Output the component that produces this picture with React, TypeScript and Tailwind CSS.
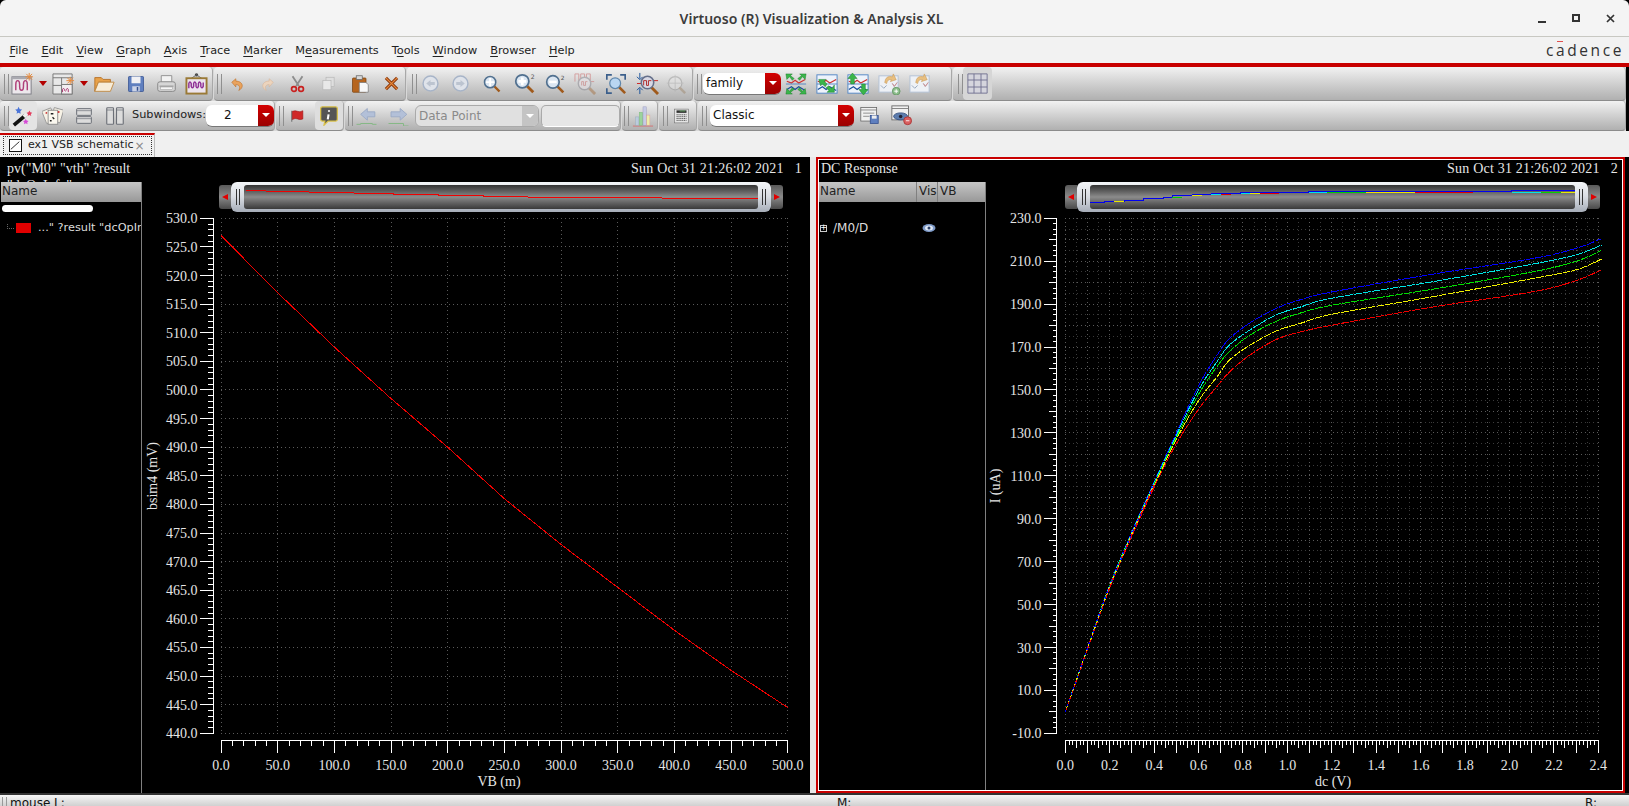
import type { ReactNode } from "react";

const sans = "font-['DejaVu_Sans',sans-serif]";
const serif = "font-['Liberation_Serif',serif]";

const Ico = ({ w, h = w, vb = 24, children }: { w: number; h?: number; vb?: number; children: ReactNode }) => (
  <svg width={w} height={h} viewBox={`0 0 ${vb} ${vb}`} className="shrink-0">
    {children}
  </svg>
);

const wave = "M5 19v-6q0-4 2-4t2 4v2q0 4 2 4t2-4v-2q0-4 2-4t2 4v6";

const Star = ({ x, y }: { x: number; y: number }) => (
  <g stroke="#e8893a" strokeWidth="1" transform={`translate(${x} ${y})`}>
    <path d="M0-4V4M-4 0H4M-3-3L3 3M-3 3L3-3" />
  </g>
);

const NewWave = () => (
  <Ico w={23}>
    <rect x="1" y="5" width="20" height="18" fill="#ece8ec" stroke="#7d7d85" />
    <rect x="1" y="5" width="20" height="2.500" fill="#a9a9b0" />
    <path d={wave} fill="none" stroke="#b0407a" strokeWidth="1.500" />
    <Star x={19} y={5} />
  </Ico>
);

const NewLayout = () => (
  <Ico w={23}>
    <path d="M1 2h20v21H1z" fill="#e8e8e8" stroke="#777" />
    <path d="M1 6h20M10 6v17M1 14h9" stroke="#777" fill="none" />
    <rect x="10" y="13" width="11" height="10" fill="#f2eef0" stroke="#777" />
    <path d="M11 21v-3q1-2 2 0v1q1 2 2 0v-1q1-2 2 0v3" stroke="#a9356f" fill="none" />
    <Star x={19} y={9} />
  </Ico>
);

const Drop = () => <span className="ml-[5px] w-0 h-0 border-x-[4px] border-x-transparent border-t-[5px] border-t-[#b30000] shrink-0" />;

const Folder = () => (
  <Ico w={22}>
    <path d="M2 20V5h7l2 2h8v3H6L2 20z" fill="#e8a24a" stroke="#b8732a" />
    <path d="M2 20l4-10h17l-4 10z" fill="#f7edd9" stroke="#c08a45" />
  </Ico>
);

const Save = () => (
  <Ico w={18}>
    <rect x="2" y="2" width="20" height="20" rx="1" fill="#5f7fbf" stroke="#34508f" />
    <rect x="6" y="2" width="12" height="9" fill="#f1f1f4" />
    <rect x="7" y="15" width="10" height="7" fill="#ccd3e6" />
    <rect x="13" y="16" width="2" height="5" fill="#34508f" />
  </Ico>
);

const Print = () => (
  <Ico w={21}>
    <path d="M6 10V3h12v7" fill="#f2f2f2" stroke="#8a8a8a" />
    <path d="M2 12q0-2 3-2h14q3 0 3 2v7q0 2-3 2H5q-3 0-3-2z" fill="#d6d6d6" stroke="#7f7f7f" />
    <path d="M4 15h16" stroke="#888" />
    <rect x="5" y="16" width="14" height="3" fill="#f6f6f6" stroke="#999" strokeWidth=".6" />
  </Ico>
);

const Screen = () => (
  <Ico w={23}>
    <circle cx="12" cy="3" r="1.8" fill="#444" />
    <path d="M12 3L6 7M12 3l6 4" stroke="#666" />
    <rect x="1.5" y="6.5" width="21" height="16" fill="#ece4ee" stroke="#9a7a36" strokeWidth="2" />
    <path d="M4 17v-5q1-3 2.5 0v3q1 3 2.500 0v-3q1-3 2.500 0v3q1 3 2.500 0v-3q1-3 2.500 0v3q1 3 2.500 0v-4" fill="none" stroke="#8e2f95" strokeWidth="1.500" />
  </Ico>
);

const Undo = ({ faded }: { faded?: boolean }) => (
  <Ico w={14} h={16}>
    <path
      d="M3 9l7-6v4c7 0 11 4 11 8 0 3-2 6-6 8 2-3 2-5 1-7-1-2-3-3-6-3v4z"
      fill={faded ? "#ecd4bd" : "#e9a35e"}
      stroke={faded ? "#d8b496" : "#bd6d22"}
      transform={faded ? "matrix(-1 0 0 1 24 0)" : undefined}
    />
  </Ico>
);

const Scissors = () => (
  <Ico w={17} h={22}>
    <path d="M5 1l9 14M19 1l-9 14" stroke="#8c8c8c" strokeWidth="2.600" />
    <circle cx="7" cy="19" r="3.400" fill="none" stroke="#c9201f" strokeWidth="2.400" />
    <circle cx="17" cy="19" r="3.400" fill="none" stroke="#c9201f" strokeWidth="2.400" />
  </Ico>
);

const CopyIco = () => (
  <Ico w={15} h={17}>
    <rect x="8" y="2" width="13" height="15" fill="#dedede" stroke="#b3b3b3" />
    <rect x="3" y="7" width="13" height="15" fill="#e8e8e8" stroke="#b3b3b3" />
  </Ico>
);

const Paste = () => (
  <Ico w={18} h={22}>
    <rect x="2" y="4" width="18" height="19" rx="1" fill="#b6651e" stroke="#7a4312" />
    <rect x="7" y="1" width="8" height="5" fill="#d9d9d9" stroke="#666" />
    <path d="M11 10h9l3 3v10H11z" fill="#f7f7f7" stroke="#777" />
  </Ico>
);

const XIco = () => (
  <Ico w={15}>
    <path d="M3 3l18 18M21 3L3 21" stroke="#8a3a10" strokeWidth="5" />
    <path d="M3 3l18 18M21 3L3 21" stroke="#e8883a" strokeWidth="2" />
  </Ico>
);

const Circ = ({ dir }: { dir: "l" | "r" }) => (
  <Ico w={17}>
    <circle cx="12" cy="12" r="10.500" fill="#dfe3ea" stroke="#a7b4c8" strokeWidth="2" />
    <path d={dir === "l" ? "M6 12l6-5v3h6v4h-6v3z" : "M18 12l-6-5v3H6v4h6v3z"} fill="#bcc4d0" />
  </Ico>
);

const Mag = ({ w = 18, faded, children }: { w?: number; faded?: boolean; children?: ReactNode }) => (
  <Ico w={w}>
    <g opacity={faded ? 0.45 : 1}>
      <path d="M14 14l8 8" stroke="#a05a1c" strokeWidth="3.200" />
      <circle cx="9.500" cy="9.500" r="7.500" fill="#dbe6f2" stroke="#51708f" strokeWidth="2" />
      {children}
    </g>
  </Ico>
);

const Fit = () => (
  <Ico w={20}>
    <path d="M1 7V1h6M17 1h6v6M1 17v6h6" fill="none" stroke="#3b5f8c" strokeWidth="2" />
    <path d="M15 15l8 8" stroke="#a05a1c" strokeWidth="3" />
    <circle cx="11" cy="11" r="6.500" fill="#b9d6f2" stroke="#5f86ab" strokeWidth="1.500" />
  </Ico>
);

const PulseMag = ({ faded }: { faded?: boolean }) => (
  <Ico w={23}>
    <g opacity={faded ? 0.55 : 1}>
      <path d="M1 10V2h4v8h2V2h4v8h2V2h4v8h4" fill="none" stroke="#cc6a6a" />
      <path d="M15 16l7 7" stroke="#a87a50" strokeWidth="3" />
      <circle cx="11" cy="12" r="6.500" fill="#e8e2e6" stroke="#8d8d95" strokeWidth="1.500" />
      <path d="M8 14v-4h2v4h2v-4h2" fill="none" stroke="#c77" />
    </g>
  </Ico>
);

const PulseZoom = () => (
  <Ico w={23}>
    <path d="M4 1v6M4 17v6" stroke="#174f9a" />
    <path d="M1 5l3 3 3-3M1 19l3-3 3 3" fill="none" stroke="#174f9a" />
    <path d="M1 12h6M18 9h5" stroke="#c22" />
    <path d="M16 16l7 7" stroke="#a05a1c" strokeWidth="3" />
    <circle cx="12" cy="11" r="6.500" fill="#d8d8e4" stroke="#66708a" strokeWidth="1.600" />
    <path d="M8 14v-5h3v5h2V9h3" fill="none" stroke="#b02a2a" />
  </Ico>
);

const Cross = () => (
  <Ico w={20}>
    <g opacity=".5">
      <circle cx="11" cy="11" r="8" fill="#e6e6e6" stroke="#999" strokeWidth="1.500" />
      <path d="M11 1v20M1 11h20" stroke="#aaa" />
      <path d="M16 16l7 7" stroke="#a08a70" strokeWidth="3" />
    </g>
  </Ico>
);

const GArrow = ({ d }: { d: string }) => <path d={d} fill="#39b54a" stroke="#1c7a2a" strokeWidth=".5" />;

const Traces = ({ mode }: { mode: 1 | 2 | 3 }) => (
  <Ico w={22}>
    <rect x="1" y="2" width="22" height="20" fill={mode === 1 ? "none" : "#eef3fb"} stroke={mode === 1 ? "none" : "#4f84c4"} />
    <path d="M2 9l5 2 4-3 4 3 7-4" fill="none" stroke="#c33" strokeWidth="1.300" />
    <path d="M2 18l5-3 4 3 4-3 7 4" fill="none" stroke="#174f9a" strokeWidth="1.300" />
    <path d="M1 12h22" stroke="#4f84c4" />
    {mode === 1 && (
      <>
        <GArrow d="M1 1h7L6 3l4 3-2 2-3-4-3 3zM23 1h-7l2 2-4 3 2 2 3-4 3 3zM1 23h7l-2-2 4-3-2-2-3 4-3-3zM23 23h-7l2-2-4-3 2-2 3 4 3-3z" />
      </>
    )}
    {mode === 2 && (
      <>
        <GArrow d="M3 7l8 0-2 2 3 3-2 3-3-3-2 2zM20 13v8h-8l2-2-3-3 3-2 3 3z" />
      </>
    )}
    {mode === 3 && (
      <>
        <GArrow d="M6 0l5 6H8v6H4V6H1zM18 24l-5-6h3v-6h4v6h3z" />
      </>
    )}
  </Ico>
);

const TraceOrange = ({ plus }: { plus?: boolean }) => (
  <Ico w={23}>
    <rect x="1" y="4" width="20" height="17" fill="#eef1f6" stroke="#b4c2d6" />
    <path d="M3 14l3 3 3-3M15 12l2 3 3-4" fill="none" stroke="#97a8bd" />
    <path d="M15 12l2 3 3-4" fill="none" stroke="#d79090" />
    <path d="M7 11q1-8 8-6l1-3 3 6-6 2 1-2q-4-1-5 4z" fill="#e8bf80" stroke="#c89a58" strokeWidth=".6" />
    {plus && (
      <>
        <circle cx="19" cy="20" r="4" fill="#8dbf8d" stroke="#6a9a6a" />
        <path d="M17 20h4M19 18v4" stroke="#fff" />
      </>
    )}
  </Ico>
);

const GridIco = () => (
  <Ico w={21}>
    <path d="M1 1h22v22H1zM1 8h22M1 16h22M8 1v22M16 1v22" fill="#d5d5dd" stroke="#6d6d8d" />
  </Ico>
);

const Wand = () => (
  <Ico w={22}>
    <path d="M2 22L15 11" stroke="#111" strokeWidth="4" />
    <path d="M13 13l3-3" stroke="#eee" strokeWidth="4" />
    <path d="M7 2l1.500 2.500 2.500.5-2 2 .5 2.500L7 8.500 5 9.500l.5-2.500-2-2 2.500-.5z" fill="#4a74d8" />
    <path d="M19 6l1 2 2 .5-1.500 1.500.5 2-2-1-2 1 .5-2L16 8.500l2-.5z" fill="#e33b5c" />
    <path d="M15 15l1 2 2 .5-1.500 1.500.5 2-2-1-2 1 .5-2-1.500-1.500 2-.5z" fill="#d64bd6" />
  </Ico>
);

const Cards = () => (
  <Ico w={21}>
    <rect x="2" y="5" width="11" height="15" fill="#f7f2e6" stroke="#999" transform="rotate(-22 7 12)" />
    <rect x="12" y="4" width="11" height="15" fill="#f7f2e6" stroke="#999" transform="rotate(16 17 11)" />
    <rect x="7" y="6" width="11" height="16" fill="#fbf8ef" stroke="#888" />
    <path d="M10 10h3M12 14l2 2M9 18h2" stroke="#222" strokeWidth="1.500" />
    <circle cx="5" cy="9" r="1" fill="#c33" />
    <circle cx="19" cy="8" r="1.200" fill="#c33" />
  </Ico>
);

const Stack = () => (
  <Ico w={16} h={18}>
    <rect x="1" y="1" width="22" height="10" rx="1" fill="#dcdcdc" stroke="#6c7078" strokeWidth="1.500" />
    <rect x="1" y="13" width="22" height="10" rx="1" fill="#dcdcdc" stroke="#6c7078" strokeWidth="1.500" />
    <path d="M1 4h22M1 16h22" stroke="#6c7078" />
  </Ico>
);

const Cols = () => (
  <Ico w={18}>
    <rect x="1" y="1" width="9" height="22" rx="1" fill="#dcdcdc" stroke="#6c7078" strokeWidth="1.500" />
    <rect x="14" y="1" width="9" height="22" rx="1" fill="#dcdcdc" stroke="#6c7078" strokeWidth="1.500" />
    <path d="M1 4h9M14 4h9" stroke="#6c7078" />
  </Ico>
);

const Flag = () => (
  <Ico w={14} h={16}>
    <path d="M3 3v19" stroke="#777" strokeWidth="2" />
    <path d="M4 4q5-2 9 0t9-1v14q-5 2-9 0t-9 1z" fill="#d02828" stroke="#9c1414" />
  </Ico>
);

const Info = () => (
  <Ico w={20}>
    <path d="M2 3q0-2 2-2h16q2 0 2 2v13q0 2-2 2H11l-5 5 1-5H4q-2 0-2-2z" fill="#555" stroke="#d9c14a" strokeWidth="1.500" />
    <path d="M12 5v2M11.500 10l-1 6" stroke="#fff" strokeWidth="2.500" />
  </Ico>
);

const StepArrow = ({ dir }: { dir: "l" | "r" }) => (
  <Ico w={21} h={20}>
    <path d={dir === "l" ? "M0 22h5v-1h14M19 21v1h5" : "M0 21h18v3h6"} fill="none" stroke="#86b886" strokeWidth="1.200" />
    <path d={dir === "l" ? "M5 10l8-7v4h9v6h-9v4z" : "M22 10l-8-7v4H3v6h11v4z"} fill="#b3c0d8" stroke="#98a7c4" />
  </Ico>
);

const ChartIco = () => (
  <Ico w={22}>
    <path d="M1 23h22" stroke="#c88" strokeWidth="1.500" />
    <rect x="4" y="13" width="3.500" height="9" fill="#bcd" stroke="#9ab" strokeWidth=".5" />
    <rect x="8" y="8" width="3.500" height="14" fill="#9bd49b" stroke="#7b7" strokeWidth=".5" />
    <rect x="12" y="2" width="3.500" height="20" fill="#c6cbe6" stroke="#99b" strokeWidth=".5" />
    <rect x="16" y="11" width="3.500" height="11" fill="#eea" stroke="#d99" strokeWidth=".5" />
  </Ico>
);

const Calc = () => (
  <Ico w={15} h={18}>
    <rect x="1" y="1" width="22" height="22" fill="#e4e4e4" stroke="#777" />
    <rect x="4" y="3" width="16" height="4" fill="#333" />
    <path d="M9 4h9" stroke="#6c6" />
    <path d="M4 10h16M4 13h16M4 16h16M4 19h16" stroke="#555" strokeWidth="1.500" strokeDasharray="2 1" />
  </Ico>
);

const SaveWin = () => (
  <Ico w={19}>
    <rect x="1" y="2" width="20" height="17" fill="#f1f1f1" stroke="#666" />
    <path d="M1 5h20M4 9h14M4 13h8" stroke="#777" />
    <rect x="13" y="12" width="10" height="10" fill="#5f7fbf" stroke="#34508f" />
    <rect x="15" y="12" width="6" height="4" fill="#eee" />
  </Ico>
);

const EyeOff = () => (
  <Ico w={21}>
    <rect x="1" y="1" width="19" height="16" fill="#f1f1f1" stroke="#666" />
    <path d="M1 4h19" stroke="#777" />
    <ellipse cx="11" cy="13" rx="8" ry="4" fill="#5c7cad" stroke="#324f80" />
    <circle cx="11" cy="13" r="2" fill="#223" />
    <circle cx="19" cy="18" r="4.500" fill="#d96060" stroke="#a33" />
    <path d="M17 18h4" stroke="#fff" />
  </Ico>
);

const Handle = () => <span className="w-[5px] h-[20px] border-x border-[#8f8f8f] shrink-0" />;

const Group = ({ className, children }: { className: string; children: ReactNode }) => (
  <div className={`flex items-center h-full rounded-[4px] border-b border-r border-b-[#8c8c8c] border-r-[#a8a8a8] bg-linear-to-b from-[#f2f2f2] to-[#b0b0b0] ${className}`}>
    {children}
  </div>
);

const Combo = ({ text, className, grey, textClass = "pl-[3px]" }: { text: string; className: string; grey?: boolean; textClass?: string }) => (
  <div className={`flex items-stretch h-[22px] shrink-0 rounded-[6px] overflow-hidden border-b border-[#777] ${grey ? "bg-[#e0e0e0]" : "bg-white"} ${className}`}>
    <span className={`flex-1 text-[12px] leading-[21px] ${textClass} ${grey ? "text-[#8a8a8a]" : "text-[#111]"}`}>{text}</span>
    <span className={`w-[16px] flex items-center justify-center ${grey ? "bg-[#c4c4c4]" : "bg-linear-to-b from-[#d40000] to-[#9a0000]"}`}>
      <span className="w-0 h-0 border-x-[4px] border-x-transparent border-t-[4px] border-t-white" />
    </span>
  </div>
);

const Menu = ({ u, rest, pre = "" }: { u: string; rest: string; pre?: string }) => (
  <span>
    {pre}
    <span className="underline underline-offset-2">{u}</span>
    {rest}
  </span>
);

// ---- plot data

const vth: [number, number][] = [
  [0, 527], [50, 517], [100, 507.5], [150, 498.5], [200, 490], [250, 481], [300, 473], [350, 465.5], [400, 458], [450, 451], [500, 444.5],
];

const low: [number, number][] = [[0, 0], [0.1, 29.5], [0.2, 58.5], [0.3, 83], [0.4, 106]];
const xs = [0.5, 0.6, 0.682, 0.74, 0.832, 0.95, 1.057, 1.206, 1.656, 2.107, 2.3, 2.414];
const curves: { color: string; v: number[] }[] = [
  { color: "#0000ff", v: [130, 152, 166, 174, 181.3, 188, 192, 195.8, 204, 211.3, 216, 220.5] },
  { color: "#00e5e5", v: [129, 150, 163, 171, 178, 185, 188.6, 192.9, 200.5, 208.7, 213, 217.5] },
  { color: "#00e000", v: [128, 148, 160.8, 168, 175.6, 182, 185.8, 189.6, 197, 205.1, 210, 215] },
  { color: "#f0f000", v: [127, 145, 156, 164, 170.9, 177.5, 181, 185.4, 193.5, 202, 206, 211] },
  { color: "#f00000", v: [125, 141, 151.500, 158.500, 166.3, 173.500, 177, 180.3, 188.7, 195.8, 201, 206] },
];

const rx = (d: number) => 1065.3 + d * 222.1;
const ry = (v: number) => 218.3 + (230 - v) * 2.146;
const lx = (v: number) => 220 + v * 1.1334;
const ly = (v: number) => 218.3 + (530 - v) * 5.722;

const range = (n: number) => Array.from({ length: n }, (_, i) => i);

// catmull-rom, sampled, so the knee of the curves stays round
const smooth = (pts: number[][]) => {
  const out: string[] = [];
  for (let i = 0; i < pts.length - 1; i++) {
    const p0 = pts[Math.max(i - 1, 0)];
    const p1 = pts[i];
    const p2 = pts[i + 1];
    const p3 = pts[Math.min(i + 2, pts.length - 1)];
    for (let k = 0; k < 8; k++) {
      const t = k / 8;
      const f = (a: number, b: number, c: number, d: number) =>
        0.5 * (2 * b + (c - a) * t + (2 * a - 5 * b + 4 * c - d) * t * t + (3 * b - a - 3 * c + d) * t * t * t);
      out.push(`${f(p0[0], p1[0], p2[0], p3[0])},${f(p0[1], p1[1], p2[1], p3[1])}`);
    }
  }
  const last = pts[pts.length - 1];
  out.push(`${last[0]},${last[1]}`);
  return out.join(" ");
};

const LeftPlot = () => (
  <svg viewBox="141 212 669 581" className="w-[669px] h-[581px] block" shapeRendering="crispEdges">
    {range(19).map((i) => (
      <line key={i} x1={220} x2={787} y1={218.3 + i * 28.61} y2={218.3 + i * 28.61} stroke="#5a5a5a" strokeDasharray="1 3" />
    ))}
    {range(11).map((i) => (
      <line key={i} y1={218} y2={733} x1={220 + i * 56.67} x2={220 + i * 56.67} stroke="#5a5a5a" strokeDasharray="1 3" />
    ))}
    <line x1={212} x2={212} y1={218} y2={734} stroke="#fff" />
    {range(91).map((i) => {
      const y = 218.3 + i * 5.722;
      return <line key={i} x1={i % 5 === 0 ? 199 : 207} x2={212} y1={y} y2={y} stroke="#fff" />;
    })}
    {range(19).map((i) => (
      <text key={i} x={196.5} y={218.3 + i * 28.61 + 5} textAnchor="end" fill="#e6e6e6" fontSize="14" fontFamily="Liberation Serif" shapeRendering="auto">
        {(530 - i * 5).toFixed(1)}
      </text>
    ))}
    <line x1={220} x2={787} y1={740} y2={740} stroke="#fff" />
    {range(51).map((i) => {
      const x = 220 + i * 11.334;
      return <line key={i} x1={x} x2={x} y1={740} y2={i % 5 === 0 ? 753 : 746} stroke="#fff" />;
    })}
    {range(11).map((i) => (
      <text key={i} x={220 + i * 56.67} y={770} textAnchor="middle" fill="#e6e6e6" fontSize="14" fontFamily="Liberation Serif">
        {(i * 50).toFixed(1)}
      </text>
    ))}
    <text x={498} y={786} textAnchor="middle" fill="#e6e6e6" fontSize="14" fontFamily="Liberation Serif">VB (m)</text>
    <text transform="translate(156 476) rotate(-90)" textAnchor="middle" fill="#e6e6e6" fontSize="14" fontFamily="Liberation Serif">bsim4 (mV)</text>
    <polyline points={vth.map(([a, b]) => `${lx(a)},${ly(b)}`).join(" ")} fill="none" stroke="#f00000" />
  </svg>
);

const RightPlot = () => (
  <svg viewBox="986 212 636 578" className="w-[636px] h-[578px] block" shapeRendering="crispEdges">
    {range(49).map((i) => (
      <line key={i} x1={1065} x2={1600} y1={218.3 + i * 10.73} y2={218.3 + i * 10.73} stroke={i % 2 ? "#3a3a3a" : "#5a5a5a"} strokeDasharray="1 3" />
    ))}
    {range(49).map((i) => (
      <line key={i} y1={218} y2={733} x1={1065.3 + i * 11.105} x2={1065.3 + i * 11.105} stroke={i % 2 ? "#3a3a3a" : "#5a5a5a"} strokeDasharray="1 3" />
    ))}
    <line x1={1056.5} x2={1056.5} y1={218} y2={734} stroke="#fff" />
    {range(97).map((i) => {
      const y = 218.3 + i * 5.365;
      return <line key={i} x1={i % 8 === 0 ? 1044 : i % 4 === 0 ? 1048.500 : 1052.500} x2={1056.5} y1={y} y2={y} stroke="#fff" />;
    })}
    {range(13).map((i) => (
      <text key={i} x={1041.5} y={218.3 + i * 42.92 + 5} textAnchor="end" fill="#e6e6e6" fontSize="14" fontFamily="Liberation Serif">
        {(230 - i * 20).toFixed(1)}
      </text>
    ))}
    <line x1={1065} x2={1599} y1={740} y2={740} stroke="#fff" />
    {range(145).map((i) => {
      const x = 1065.3 + i * 3.701;
      return <line key={i} x1={x} x2={x} y1={740} y2={i % 6 === 0 ? 752.500 : i % 3 === 0 ? 748 : 744.500} stroke="#fff" />;
    })}
    {range(13).map((i) => (
      <text key={i} x={1065.3 + i * 44.42} y={770} textAnchor="middle" fill="#e6e6e6" fontSize="14" fontFamily="Liberation Serif">
        {(i * 0.2).toFixed(1)}
      </text>
    ))}
    <text x={1333} y={786} textAnchor="middle" fill="#e6e6e6" fontSize="14" fontFamily="Liberation Serif">dc (V)</text>
    <text transform="translate(1000 486) rotate(-90)" textAnchor="middle" fill="#e6e6e6" fontSize="14" fontFamily="Liberation Serif">I (uA)</text>
    {curves.map((c, idx) => (
      <polyline
        key={c.color}
        points={smooth([...low.map(([d, v]) => [d, v + (2 - idx) * v * 0.006]), ...xs.map((d, i) => [d, c.v[i]])].map(([d, v]) => [rx(d), ry(v)]))}
        fill="none"
        stroke={c.color}
        strokeDasharray="8 1"
      />
    ))}
    {["#0000ff", "#f0f000", "#f00000"].map((col, k) => (
      <polyline
        key={col}
        points={low.map(([d, v]) => `${rx(d)},${ry(v)}`).join(" ")}
        fill="none"
        stroke={col}
        strokeDasharray="2 4"
        strokeDashoffset={k * 2}
      />
    ))}
  </svg>
);

const blueSteps = "27,607 70,607 70,603 125,603 125,600 180,600 180,595 237,595 237,592 263,592 263,587 320,587 320,583 375,583 375,580 460,580 460,577 654,577 654,575 1237,575 1237,572 1418,572";
const overlays: [number, number, number, string][] = [
  [97, 125, 602, "#e8e800"], [263, 292, 590, "#00d000"], [320, 348, 586, "#e8e800"], [375, 403, 583, "#00e5e5"], [403, 430, 583, "#e00000"],
  [460, 487, 580, "#00e5e5"], [487, 515, 580, "#e8e800"], [515, 570, 580, "#e00000"], [654, 708, 577, "#00e5e5"], [708, 820, 577, "#00d000"],
  [820, 960, 577, "#e8e800"], [960, 1125, 577, "#e00000"], [1237, 1320, 575, "#00e5e5"], [1320, 1377, 575, "#00d000"], [1377, 1418, 575, "#e8e800"],
];

const Scrubber = ({ w, pad, right }: { w: number; pad: string; right?: boolean }) => (
  <div className={`flex items-center h-[30px] shrink-0 ${pad}`}>
    <span className="w-[12px] h-[24px] rounded-l-[3px] bg-linear-to-b from-[#5a5a5a] via-[#8a8a8a] to-[#4a4a4a] flex items-center justify-center shrink-0">
      <span className="w-0 h-0 border-y-[3px] border-y-transparent border-r-[6px] border-r-[#e00000]" />
    </span>
    <div className="flex items-center rounded-[6px] h-[30px] shrink-0 bg-linear-to-b from-[#f4f6f8] via-[#d8dce2] to-[#a6adb8]" style={{ width: w }}>
      <span className="ml-[5px] w-[4px] h-[16px] border-x border-[#333] shrink-0" />
      <div className="ml-[4px] mr-[4px] flex-1 h-[24px] rounded-[3px] overflow-hidden bg-linear-to-b from-[#333] via-[#8c8c8c] to-[#3a3a3a]">
        {right ? (
          <svg viewBox="27 555 1391 70" preserveAspectRatio="none" className="w-full h-full block" shapeRendering="crispEdges">
            <polyline points={blueSteps} fill="none" stroke="#0000f0" strokeWidth="1" vectorEffect="non-scaling-stroke" />
            {overlays.map(([a, b, y, c]) => (
              <line key={a} x1={a} x2={b} y1={y + 1} y2={y + 1} stroke={c} vectorEffect="non-scaling-stroke" />
            ))}
          </svg>
        ) : (
          <svg viewBox="0 0 516 24" className="w-full h-full block" shapeRendering="crispEdges">
            <polyline
              points="2,5 22,5 22,6 65,6 65,7 110,7 110,8 150,8 150,9 195,9 195,10 240,10 240,11 285,11 285,12 330,12 330,12 375,12 375,13 420,13 420,14 516,14"
              fill="none"
              stroke="#f00000"
            />
          </svg>
        )}
      </div>
      <span className="mr-[5px] w-[4px] h-[16px] border-x border-[#333] shrink-0" />
    </div>
    <span className="w-[12px] h-[24px] rounded-r-[3px] bg-linear-to-b from-[#5a5a5a] via-[#8a8a8a] to-[#4a4a4a] flex items-center justify-center shrink-0">
      <span className="w-0 h-0 border-y-[3px] border-y-transparent border-l-[6px] border-l-[#e00000]" />
    </span>
  </div>
);

const Eye = () => (
  <svg width="14" height="10" viewBox="0 0 14 10">
    <ellipse cx="7" cy="5" rx="6.500" ry="4" fill="#7e9ac8" />
    <ellipse cx="7" cy="5" rx="4" ry="2.500" fill="#dfe8f5" />
    <circle cx="7" cy="5" r="1.500" fill="#2b3f66" />
  </svg>
);

const ColHead = ({ className, children }: { className: string; children: ReactNode }) => (
  <div className={`h-full border-r border-[#808080] pl-[1px] leading-[19px] text-[#222] ${className}`}>{children}</div>
);

export default function App() {
  return (
    <div className={`w-[1629px] h-[806px] overflow-hidden flex flex-col bg-black text-[11.3px] ${sans}`}>
      <div className="h-[37px] shrink-0 rounded-t-[6px] bg-[#f4f4f4] flex items-center relative border-b border-[#c8c8c2]">
        <span className="flex-1 pr-[6px] text-center font-['Noto_Sans',sans-serif] font-semibold text-[14px] text-[#3c3c3c]">
          Virtuoso (R) Visualization &amp; Analysis XL
        </span>
        <div className="absolute right-[14px] top-[14px] flex items-start">
          <span className="mt-[7px] w-[8px] h-[2px] bg-[#333]" />
          <span className="ml-[26px] w-[8px] h-[8px] border-2 border-[#333]" />
          <svg width="9" height="9" viewBox="0 0 9 9" className="ml-[26px]">
            <path d="M1 1l7 7M8 1L1 8" stroke="#333" strokeWidth="1.700" />
          </svg>
        </div>
      </div>

      <div className="h-[26px] shrink-0 bg-[#f2f2f2] flex items-center justify-between pl-[9.500px] pr-[5px] pt-[3px] text-[#222] text-[12px]">
        <div className="flex gap-[13px] text-[11.3px]">
          <Menu u="F" rest="ile" />
          <Menu u="E" rest="dit" />
          <Menu u="V" rest="iew" />
          <Menu u="G" rest="raph" />
          <Menu u="A" rest="xis" />
          <Menu u="T" rest="race" />
          <Menu u="M" rest="arker" />
          <Menu pre="M" u="e" rest="asurements" />
          <Menu pre="T" u="o" rest="ols" />
          <Menu u="W" rest="indow" />
          <Menu u="B" rest="rowser" />
          <Menu u="H" rest="elp" />
        </div>
        <span className="relative mb-[4px] font-['Open_Sans',sans-serif] text-[15.5px] leading-[14px] tracking-[2.6px] text-[#333]">
          cadence
          <span className="absolute left-[11px] top-[-2px] w-[6px] h-[1.500px] bg-[#e05050]" />
        </span>
      </div>
      <div className="h-[4px] shrink-0 bg-[#c80000]" />

      <div className="h-[34px] shrink-0 w-[1626px] flex gap-px bg-[#d8d8d8] items-center">
        <Group className="w-[213px] pl-[4px] shrink-0">
          <Handle />
          <span className="ml-[2px] flex"><NewWave /></span>
          <Drop />
          <span className="ml-[5px] flex"><NewLayout /></span>
          <Drop />
          <span className="ml-[5px] flex"><Folder /></span>
          <span className="ml-[12px] flex"><Save /></span>
          <span className="ml-[11px] flex"><Print /></span>
          <span className="ml-[8px] flex"><Screen /></span>
        </Group>
        <Group className="w-[192px] pl-[3px] shrink-0">
          <Handle />
          <span className="ml-[8px] flex"><Undo /></span>
          <span className="ml-[17px] flex"><Undo faded /></span>
          <span className="ml-[14px] flex"><Scissors /></span>
          <span className="ml-[15px] flex"><CopyIco /></span>
          <span className="ml-[15px] flex"><Paste /></span>
          <span className="ml-[15px] flex"><XIco /></span>
        </Group>
        <Group className="w-[286px] pl-[5px] shrink-0">
          <Handle />
          <span className="ml-[5px] flex"><Circ dir="l" /></span>
          <span className="ml-[13px] flex"><Circ dir="r" /></span>
          <span className="ml-[14px] flex">
            <Mag><path d="M9.500 4v11M4 9.500h11" stroke="#fff" strokeWidth="2.500" /></Mag>
          </span>
          <span className="ml-[13px] flex">
            <Mag w={21}>
              <path d="M9.500 5v9M5 9.500h9" stroke="#fff" strokeWidth="3" />
              <text x="19" y="7" fontSize="7" fill="#555" fontFamily="DejaVu Sans">2</text>
            </Mag>
          </span>
          <span className="ml-[10px] flex">
            <Mag w={20}>
              <path d="M5 9.500h9" stroke="#fff" strokeWidth="3" />
              <text x="19" y="7" fontSize="7" fill="#555" fontFamily="DejaVu Sans">2</text>
            </Mag>
          </span>
          <span className="ml-[9px] flex"><PulseMag faded /></span>
          <span className="ml-[9px] flex"><Fit /></span>
          <span className="ml-[10px] flex"><PulseZoom /></span>
          <span className="ml-[7px] flex"><Cross /></span>
        </Group>
        <Group className="w-[258px] pl-[3px] shrink-0">
          <Handle />
          <Combo text="family" className="ml-[1px] w-[78px]" />
          <span className="ml-[4px] flex"><Traces mode={1} /></span>
          <span className="ml-[9px] flex"><Traces mode={2} /></span>
          <span className="ml-[9px] flex"><Traces mode={3} /></span>
          <span className="ml-[9px] flex"><TraceOrange plus /></span>
          <span className="ml-[8px] flex"><TraceOrange /></span>
        </Group>
        <Group className="flex-1 pl-[5px]">
          <Handle />
          <span className="w-[29px] h-full flex items-center justify-center rounded-[4px] bg-[#d6d6d6]"><GridIco /></span>
        </Group>
      </div>

      <div className="h-[30px] shrink-0 w-[1626px] flex gap-px bg-[#d8d8d8] items-center">
        <Group className="w-[275px] pl-[4px] shrink-0">
          <Handle />
          <span className="w-[28px] h-full flex items-center justify-center rounded-[4px] bg-[#e4e4e4]"><Wand /></span>
          <span className="ml-[5px] flex"><Cards /></span>
          <span className="ml-[13px] flex"><Stack /></span>
          <span className="ml-[14px] flex"><Cols /></span>
          <span className="ml-[8px] w-[73px] text-[#222] whitespace-nowrap">Subwindows:</span>
          <Combo text="2" className="ml-[1px] w-[68px]" textClass="pl-[18px]" />
        </Group>
        <Group className="w-[68px] pl-[3px] shrink-0">
          <Handle />
          <span className="ml-[6px] flex"><Flag /></span>
          <span className="ml-[11px] w-[29px] h-full flex items-center justify-center rounded-[4px] bg-[#dedede]"><Info /></span>
        </Group>
        <Group className="w-[276px] pl-[3px] shrink-0">
          <Handle />
          <span className="ml-[3px] flex"><StepArrow dir="l" /></span>
          <span className="ml-[11px] flex"><StepArrow dir="r" /></span>
          <Combo text="Data Point" grey className="ml-[6px] w-[124px] border border-[#aaa]" />
          <div className="ml-[2px] w-[79px] h-[22px] rounded-[5px] bg-[#e6e6e6] border border-[#aaa] border-b-white" />
        </Group>
        <Group className="w-[36px] pl-[2px] shrink-0">
          <Handle />
          <span className="ml-[3px] flex"><ChartIco /></span>
        </Group>
        <Group className="w-[38px] pl-[4px] shrink-0">
          <Handle />
          <span className="ml-[6px] flex"><Calc /></span>
        </Group>
        <Group className="flex-1 pl-[4px]">
          <Handle />
          <Combo text="Classic" className="ml-[3px] w-[144px]" />
          <span className="ml-[6px] flex"><SaveWin /></span>
          <span className="ml-[12px] flex"><EyeOff /></span>
        </Group>
      </div>

      <div className="h-[26px] shrink-0 bg-[#f0f0f0] pt-[2px]">
        <div className="w-[155px] h-[24px] border-t-2 border-[#c80000] border-r border-r-[#bbb] pl-[3px] pt-[1px]">
          <div className="w-[149px] h-[19px] border border-dotted border-[#333] flex items-center pl-[5px] text-[#222] text-[11px]">
            <span className="w-[13px] h-[13px] border border-[#111] bg-white shrink-0 flex">
              <svg viewBox="0 0 13 13" className="w-full h-full">
                <path d="M1 11L11 2" stroke="#111" />
              </svg>
            </span>
            <span className="ml-[6px] whitespace-nowrap">ex1 VSB schematic</span>
            <span className="ml-[1px] text-[#888] text-[12px] leading-none">×</span>
          </div>
        </div>
      </div>

      <div className="h-[636px] shrink-0 flex bg-black">
        <section className="w-[810px] shrink-0 flex flex-col bg-black">
          <div className={`h-[25px] shrink-0 flex items-start justify-between pl-[7px] pr-[8px] pt-[4px] text-[#e6e6e6] text-[14px] leading-[16px] overflow-hidden ${serif}`}>
            <span className="relative">pv("M0" "vth" ?result<span className="absolute left-0 top-[17px] whitespace-nowrap">"dcOpInfo"</span></span>
            <span className="whitespace-pre tracking-[0.2px]">Sun Oct 31 21:26:02 2021   1</span>
          </div>
          <div className="flex flex-1 min-h-0">
            <div className="w-[142px] shrink-0 border-r border-[#808080] pl-px flex flex-col text-[11.3px] text-[#ddd]">
              <div className="h-[20px] shrink-0 bg-linear-to-b from-[#c6c6c6] to-[#989898] pl-[1px] leading-[19px] text-[12px] text-[#222]">Name</div>
              <div className="mt-[3px] ml-[1px] w-[91px] h-[7px] rounded-full bg-white" />
              <div className="mt-[11px] flex items-center h-[10px] whitespace-nowrap overflow-hidden">
                <span className="ml-[6px] mb-[6px] w-[7px] h-[8px] shrink-0 border-l border-b border-dotted border-[#666]" />
                <span className="ml-[2px] w-[15px] h-[10px] bg-[#e00000] shrink-0" />
                <span className="ml-[7px]">..." ?result "dcOpIr</span>
              </div>
            </div>
            <div className="flex-1 flex flex-col min-w-0">
              <Scrubber w={540} pad="pl-[77px]" />
              <LeftPlot />
            </div>
          </div>
        </section>

        <div className="w-[6px] shrink-0 bg-[#e8e8e8]" />

        <section className="w-[809px] shrink-0 h-[636px] border-2 border-[#c80000] bg-white p-px">
          <div className="w-full h-full bg-black flex flex-col">
            <div className={`h-[22px] shrink-0 flex items-start justify-between pl-[2px] pr-[4px] pt-[1px] text-[#e6e6e6] text-[14px] leading-[16px] ${serif}`}>
              <span>DC Response</span>
              <span className="whitespace-pre tracking-[0.2px]">Sun Oct 31 21:26:02 2021   2</span>
            </div>
            <div className="flex flex-1 min-h-0">
              <div className="w-[167px] shrink-0 border-r border-[#808080] flex flex-col text-[12px] text-[#ddd]">
                <div className="h-[20px] shrink-0 flex bg-linear-to-b from-[#c6c6c6] to-[#989898]">
                  <ColHead className="w-[98px]">Name</ColHead>
                  <ColHead className="w-[21px] pl-[2px]">Vis</ColHead>
                  <ColHead className="flex-1 pl-[2px] border-r-0">VB</ColHead>
                </div>
                <div className="mt-[19px] flex items-center h-[14px]">
                  <span className="ml-[1px] w-[7px] h-[7px] border border-[#ccc] flex items-center justify-center text-[8px] leading-none text-white">+</span>
                  <span className="ml-[6px] w-[90px]">/M0/D</span>
                  <span className="ml-[-1px]"><Eye /></span>
                </div>
              </div>
              <div className="flex-1 flex flex-col min-w-0">
                <Scrubber w={511} pad="pl-[79px]" right />
                <RightPlot />
              </div>
            </div>
          </div>
        </section>
      </div>

      <div className="h-[2px] shrink-0 bg-[#333]" />
      <div className="flex-1 bg-linear-to-b from-[#f6f6f6] to-[#d0d0d0] flex pl-[2px] text-[12px] leading-[14px] text-[#111] overflow-hidden">
        <span className="mt-[2px] w-[5px] h-[9px] border-x border-[#999] shrink-0" />
        <span className="ml-[3px] w-[827px] pt-[1px]">mouse L:</span>
        <span className="w-[748px] pt-[1px]">M:</span>
        <span className="pt-[1px]">R:</span>
      </div>
    </div>
  );
}
